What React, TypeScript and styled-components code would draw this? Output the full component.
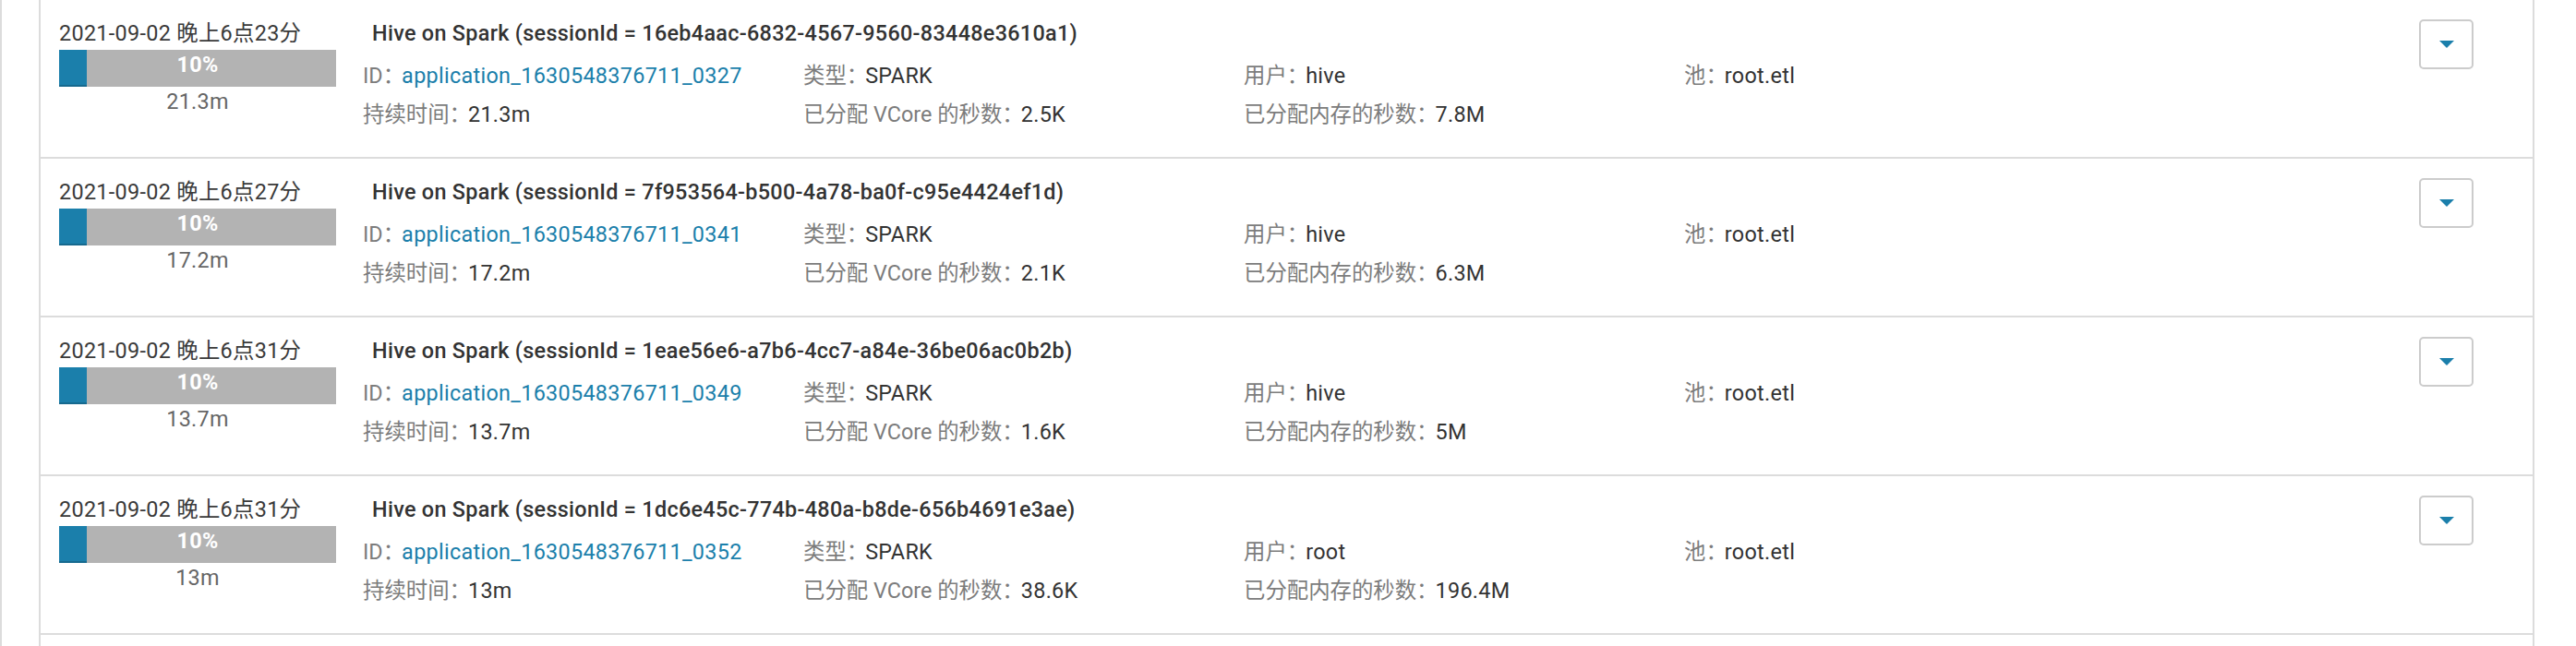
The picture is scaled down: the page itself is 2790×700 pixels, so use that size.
import styled, { createGlobalStyle } from 'styled-components';

const GlobalStyle = createGlobalStyle`
  html, body {
    margin: 0;
    padding: 0;
    background: #ffffff;
    overflow: hidden;
  }
  body {
    font-family: Roboto, "Noto Sans CJK SC", sans-serif;
    font-size: 23.4px;
    letter-spacing: 0.3px;
    color: #333333;
  }
`;

const apps = [
  {
    started: '2021-09-02 晚上6点23分',
    duration: '21.3m',
    session: '16eb4aac-6832-4567-9560-83448e3610a1',
    id: 'application_1630548376711_0327',
    type: 'SPARK',
    user: 'hive',
    pool: 'root.etl',
    vcore: '2.5K',
    memory: '7.8M',
    progress: 10,
  },
  {
    started: '2021-09-02 晚上6点27分',
    duration: '17.2m',
    session: '7f953564-b500-4a78-ba0f-c95e4424ef1d',
    id: 'application_1630548376711_0341',
    type: 'SPARK',
    user: 'hive',
    pool: 'root.etl',
    vcore: '2.1K',
    memory: '6.3M',
    progress: 10,
  },
  {
    started: '2021-09-02 晚上6点31分',
    duration: '13.7m',
    session: '1eae56e6-a7b6-4cc7-a84e-36be06ac0b2b',
    id: 'application_1630548376711_0349',
    type: 'SPARK',
    user: 'hive',
    pool: 'root.etl',
    vcore: '1.6K',
    memory: '5M',
    progress: 10,
  },
  {
    started: '2021-09-02 晚上6点31分',
    duration: '13m',
    session: '1dc6e45c-774b-480a-b8de-656b4691e3ae',
    id: 'application_1630548376711_0352',
    type: 'SPARK',
    user: 'root',
    pool: 'root.etl',
    vcore: '38.6K',
    memory: '196.4M',
    progress: 10,
  },
];

function App() {
  return (
    <>
      <GlobalStyle />
      <Page>
        <AppList>
          {apps.map((app) => (
            <AppRow key={app.id}>
              <TimeColumn>
                <StartedAt>{app.started}</StartedAt>
                <ProgressTrack>
                  <ProgressFill style={{ width: `${app.progress}%` }} />
                  <ProgressLabel>{app.progress}%</ProgressLabel>
                </ProgressTrack>
                <Elapsed>{app.duration}</Elapsed>
              </TimeColumn>
              <DetailColumn>
                <AppTitle>Hive on Spark (sessionId = {app.session})</AppTitle>
                <FieldGrid>
                  <Field>
                    <FieldLabel>ID：</FieldLabel>
                    <AppLink href="#">{app.id}</AppLink>
                  </Field>
                  <Field>
                    <FieldLabel>类型：</FieldLabel>
                    <FieldValue>{app.type}</FieldValue>
                  </Field>
                  <Field>
                    <FieldLabel>用户：</FieldLabel>
                    <FieldValue>{app.user}</FieldValue>
                  </Field>
                  <Field>
                    <FieldLabel>池：</FieldLabel>
                    <FieldValue>{app.pool}</FieldValue>
                  </Field>
                  <Field>
                    <FieldLabel>持续时间：</FieldLabel>
                    <FieldValue>{app.duration}</FieldValue>
                  </Field>
                  <Field>
                    <FieldLabel>已分配 VCore 的秒数：</FieldLabel>
                    <FieldValue>{app.vcore}</FieldValue>
                  </Field>
                  <Field>
                    <FieldLabel>已分配内存的秒数：</FieldLabel>
                    <FieldValue>{app.memory}</FieldValue>
                  </Field>
                </FieldGrid>
              </DetailColumn>
              <ActionColumn>
                <MenuButton aria-label="actions">
                  <Caret />
                </MenuButton>
              </ActionColumn>
            </AppRow>
          ))}
        </AppList>
      </Page>
    </>
  );
}

export default App;

const Page = styled.div`
  height: 700px;
  border-left: 2px solid #dcdcdc;
  padding-left: 40px;
  display: flex;
`;
const AppList = styled.div`
  width: 2699px;
  border-left: 2px solid #dcdcdc;
  border-right: 2px solid #dcdcdc;
  display: flex;
  flex-direction: column;
`;
const AppRow = styled.div`
  flex: none;
  height: 170px;
  border-bottom: 2px solid #dcdcdc;
  display: flex;
  align-items: flex-start;
`;
const TimeColumn = styled.div`
  width: 300px;
  margin-left: 20px;
  padding-top: 20px;
  display: flex;
  flex-direction: column;
  align-items: center;
  line-height: 32px;
`;
const StartedAt = styled.div`
  align-self: flex-start;
  white-space: nowrap;
  color: #3a3a3a;
  margin-bottom: 2px;
`;
const ProgressTrack = styled.div`
  position: relative;
  width: 300px;
  height: 40px;
  background: #b3b3b3;
`;
const ProgressFill = styled.div`
  height: 100%;
  background: #1b7fab;
  box-shadow: inset 0 -2px 0 #16698e;
`;
const ProgressLabel = styled.span`
  position: absolute;
  left: 0;
  right: 0;
  top: 0;
  text-align: center;
  line-height: 32px;
  font-weight: 700;
  color: #ffffff;
`;
const Elapsed = styled.div`
  color: #666666;
`;
const DetailColumn = styled.div`
  margin-left: 29px;
  padding-top: 20px;
  flex: 1;
`;
const AppTitle = styled.div`
  padding-left: 10px;
  line-height: 32px;
  font-weight: 500;
  color: #333333;
  white-space: nowrap;
`;
const FieldGrid = styled.div`
  margin-top: 9px;
  display: grid;
  grid-template-columns: repeat(4, 477px);
  grid-auto-rows: 42px;
  align-items: center;
`;
const Field = styled.div`
  white-space: nowrap;
  line-height: 42px;
`;
const FieldLabel = styled.span`
  color: #7c7c7c;
  letter-spacing: 0;
  margin-right: -3px;
`;
const FieldValue = styled.span`
  color: #333333;
`;
const AppLink = styled.a`
  color: #1b7fab;
  text-decoration: none;
`;
const ActionColumn = styled.div`
  padding-top: 21px;
  padding-right: 64px;
`;
const MenuButton = styled.button`
  width: 59px;
  height: 54px;
  padding: 0;
  border: 2px solid #cccccc;
  border-radius: 5px;
  background: #ffffff;
  display: flex;
  align-items: center;
  justify-content: center;
`;
const Caret = styled.span`
  width: 0;
  height: 0;
  border-left: 8px solid transparent;
  border-right: 8px solid transparent;
  border-top: 8px solid #1b7fab;
`;
